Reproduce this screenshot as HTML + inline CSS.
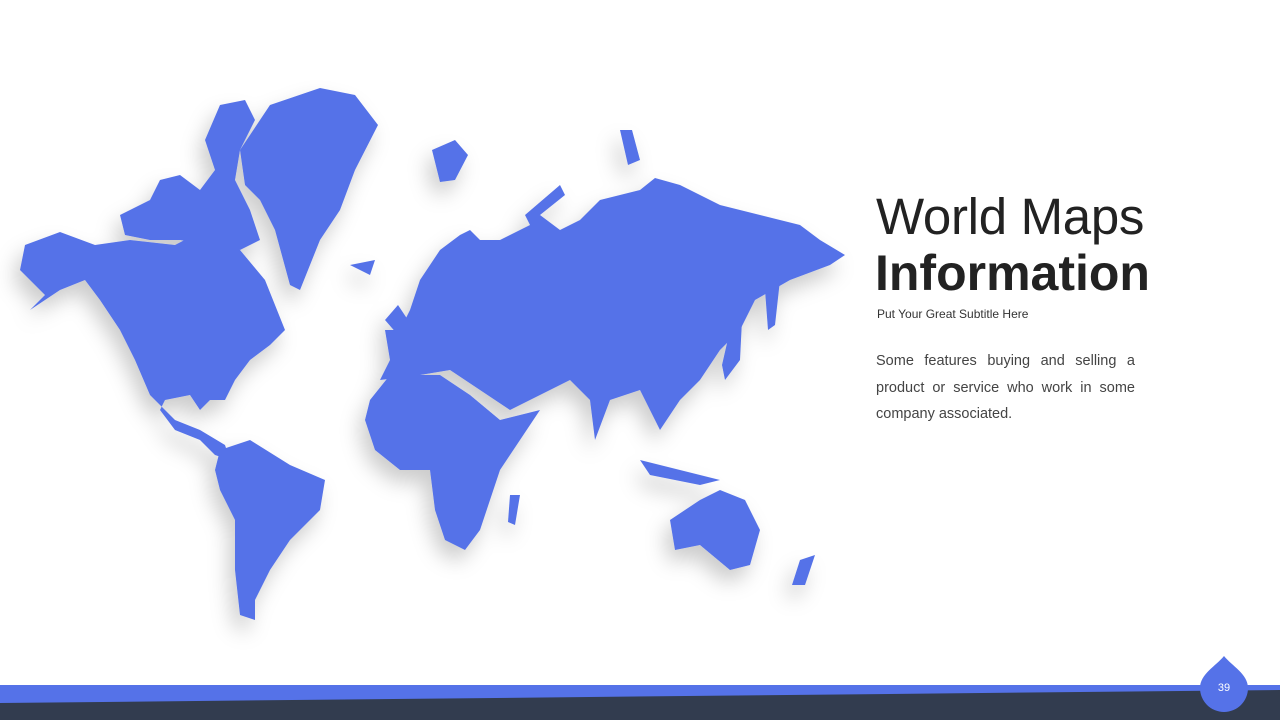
<!DOCTYPE html>
<html><head><meta charset="utf-8"><style>
body{margin:0;width:1280px;height:720px;overflow:hidden;background:#fff;position:relative;font-family:"Liberation Sans",sans-serif}
.t1{position:absolute;left:876px;top:187px;font-size:51px;color:#222;letter-spacing:-0.3px}
.t2{position:absolute;left:875px;top:244px;font-size:50px;font-weight:bold;color:#222;letter-spacing:0}
.sub{position:absolute;left:877px;top:307px;font-size:12px;color:#333}
.p{position:absolute;left:876px;top:348px;width:259px;font-size:14.5px;line-height:26.5px;color:#444;text-align:justify}
</style></head><body>
<svg width="1280" height="720" style="position:absolute;left:0;top:0">
<defs><filter id="sh" x="-20%" y="-20%" width="140%" height="140%"><feDropShadow dx="-6" dy="12" stdDeviation="10" flood-color="#000" flood-opacity="0.2"/></filter></defs>
<g fill="#5572e8" filter="url(#sh)">
<polygon points="25,245 60,232 95,245 130,240 175,245 200,232 240,250 265,280 285,330 270,345 250,360 235,380 225,400 210,400 200,410 190,395 165,400 160,410 175,430 200,440 215,455 230,460 225,445 200,430 175,420 150,395 135,360 120,330 100,300 85,280 60,290 30,310 45,295 20,270"/>
<polygon points="120,215 150,200 160,180 180,175 200,190 215,170 205,140 220,105 245,100 255,120 240,150 235,180 250,210 260,240 240,250 210,245 180,240 150,240 125,235"/>
<polygon points="240,150 270,105 320,88 355,95 378,125 355,170 340,210 320,240 300,290 290,285 275,230 260,200 245,185"/>
<polygon points="220,450 250,440 290,465 325,480 320,510 290,540 270,570 255,600 255,620 240,615 235,570 235,520 220,490 215,470"/>
<polygon points="385,330 390,360 380,380 420,375 450,370 480,390 510,410 540,395 570,380 590,400 595,440 610,400 640,390 660,430 680,400 700,380 720,350 740,330 755,300 790,280 830,265 845,255 820,240 800,225 760,215 720,205 680,185 655,178 640,190 600,200 580,220 560,230 540,215 530,225 500,240 480,240 470,230 460,235 440,250 420,280 410,310 400,330"/>
<polygon points="370,400 390,375 440,375 470,395 500,420 540,410 520,440 500,470 490,500 480,530 465,550 445,540 435,510 430,470 400,470 375,450 365,420"/>
<polygon points="670,520 700,500 720,490 745,500 760,530 750,565 730,570 700,545 675,550"/>
<polygon points="510,495 520,495 515,525 508,522"/>
<polygon points="385,320 398,305 408,320 398,335"/>
<polygon points="432,150 455,140 468,155 455,180 440,182"/>
<polygon points="620,130 632,130 640,160 628,165"/>
<polygon points="730,330 742,320 740,360 725,380 722,365"/>
<polygon points="640,460 680,470 720,480 700,485 650,475"/>
<polygon points="800,560 815,555 805,585 792,585"/>
<polygon points="525,215 560,185 565,195 540,215 535,235"/>
<polygon points="350,265 375,260 370,275"/>
<polygon points="765,290 780,280 775,325 768,330"/>
</g>
<polygon points="0,685 1280,685 1280,703 0,703" fill="#5572e8"/>
<polygon points="0,703 1280,690 1280,720 0,720" fill="#323c4f"/>
<path d="M1224,656 C1232,666 1248,674 1248,688 A24,24 0 1 1 1200,688 C1200,674 1216,666 1224,656 Z" fill="#5572e8"/>
<text x="1224" y="691" fill="#fff" font-size="11" text-anchor="middle" font-family="Liberation Sans">39</text>
</svg>
<div class="t1">World Maps</div>
<div class="t2">Information</div>
<div class="sub">Put Your Great Subtitle Here</div>
<div class="p">Some features buying and selling a product or service who work in some company associated.</div>
</body></html>
